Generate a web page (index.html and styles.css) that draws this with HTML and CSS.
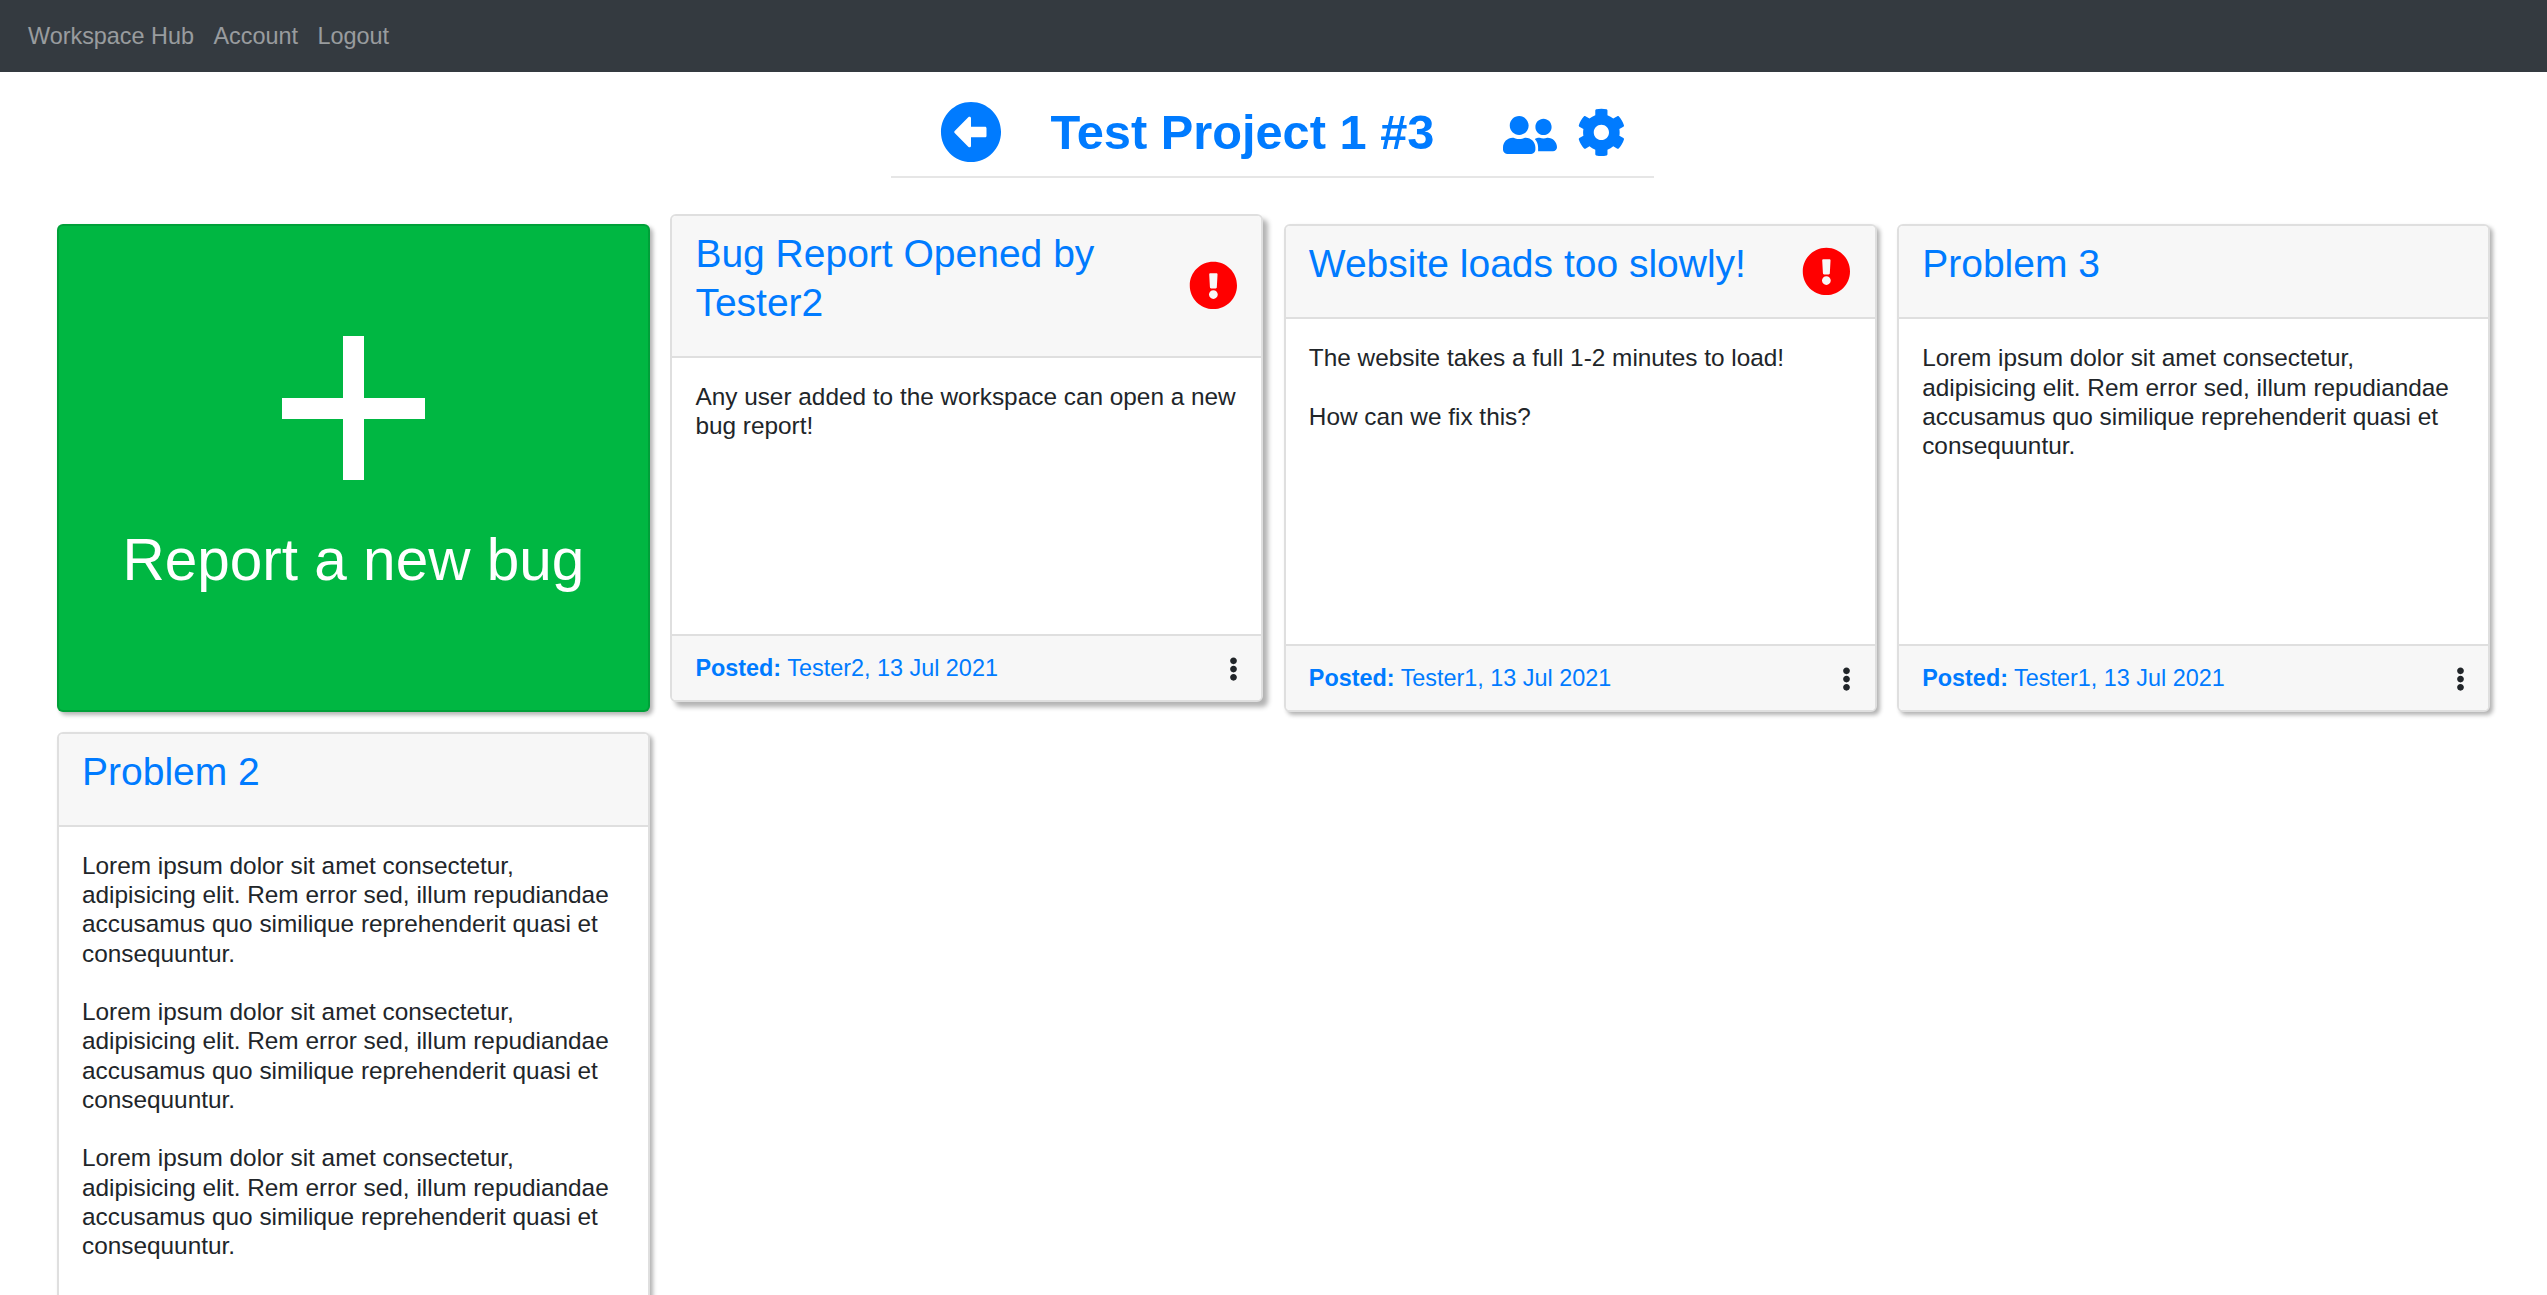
FILE: index.html
```html
<!DOCTYPE HTML>
<html>
<head>
    <title>Test Project 1 #3</title>
    <link rel="stylesheet" href="styles.css">
</head>
<body>

<nav class="navbar">
    <a href="#">Workspace Hub</a>
    <a href="#">Account</a>
    <a href="#">Logout</a>
</nav>

<header class="project-head">
    <a href="#" class="back-link">
        <svg class="icon-back" viewBox="0 0 512 512"><path d="M256 504C119 504 8 393 8 256S119 8 256 8s248 111 248 248-111 248-248 248zm116-292H256v-70.9c0-10.7-13-16.1-20.5-8.5L121.2 247.5c-4.7 4.7-4.7 12.2 0 16.9l114.3 114.9c7.6 7.6 20.5 2.2 20.5-8.5V300h116c6.6 0 12-5.4 12-12v-64c0-6.6-5.4-12-12-12z"/></svg>
    </a>
    <h1>Test Project 1 #3</h1>
    <svg class="icon-users" viewBox="0 0 640 512"><path d="M192 256c61.9 0 112-50.1 112-112S253.9 32 192 32 80 82.1 80 144s50.1 112 112 112zm76.8 32h-8.3c-20.8 10-43.9 16-68.5 16s-47.6-6-68.5-16h-8.3C51.6 288 0 339.6 0 403.2V432c0 26.5 21.5 48 48 48h288c26.5 0 48-21.5 48-48v-28.8c0-63.6-51.6-115.2-115.2-115.2zM480 256c53 0 96-43 96-96s-43-96-96-96-96 43-96 96 43 96 96 96zm48 32h-3.8c-13.9 4.8-28.6 8-44.2 8s-30.3-3.2-44.2-8H432c-20.4 0-39.2 5.9-55.7 15.4 24.4 26.3 39.7 61.2 39.7 99.8v38.4c0 2.2-.5 4.3-.6 6.4H592c26.5 0 48-21.5 48-48 0-61.9-50.1-112-112-112z"/></svg>
    <svg class="icon-cog" viewBox="0 0 512 512"><path d="M487.4 315.7l-42.6-24.6c4.3-23.2 4.3-47 0-70.2l42.6-24.6c4.9-2.8 7.1-8.6 5.5-14-11.1-35.6-30-67.8-54.7-94.6-3.8-4.1-10-5.1-14.8-2.3L380.8 110c-17.9-15.4-38.5-27.3-60.8-35.1V25.8c0-5.6-3.9-10.5-9.4-11.7-36.7-8.2-74.3-7.8-109.2 0-5.5 1.2-9.4 6.1-9.4 11.7V75c-22.2 7.9-42.8 19.8-60.8 35.1L88.7 85.5c-4.9-2.8-11-1.9-14.8 2.3-24.7 26.7-43.6 58.9-54.7 94.6-1.7 5.4.6 11.2 5.5 14L67.3 221c-4.3 23.2-4.3 47 0 70.2l-42.6 24.6c-4.9 2.8-7.1 8.6-5.5 14 11.1 35.6 30 67.8 54.7 94.6 3.8 4.1 10 5.1 14.8 2.3l42.6-24.6c17.9 15.4 38.5 27.3 60.8 35.1v49.2c0 5.6 3.9 10.5 9.4 11.7 36.7 8.2 74.3 7.8 109.2 0 5.5-1.2 9.4-6.1 9.4-11.7v-49.2c22.2-7.9 42.8-19.8 60.8-35.1l42.6 24.6c4.9 2.8 11 1.9 14.8-2.3 24.7-26.7 43.6-58.9 54.7-94.6 1.5-5.5-.7-11.3-5.6-14.1zM256 336c-44.1 0-80-35.9-80-80s35.9-80 80-80 80 35.9 80 80-35.9 80-80 80z"/></svg>
</header>

<main class="board">

    <a href="#" class="new-card">
        <svg class="icon-plus" viewBox="0 0 143 144"><path d="M61 0h21v62h61v21H82v61H61V83H0V62h61z"/></svg>
        <span>Report a new bug</span>
    </a>

    <div class="card card-hover">
        <div class="card-header">
            <h2>Bug Report Opened by Tester2</h2>
            <svg class="icon-alert" viewBox="0 0 512 512"><path d="M504 256c0 136.997-111.043 248-248 248S8 392.997 8 256C8 119.083 119.043 8 256 8s248 111.083 248 248zm-248 50c-25.405 0-46 20.595-46 46s20.595 46 46 46 46-20.595 46-46-20.595-46-46-46zm-43.673-165.346l7.418 136c.347 6.364 5.609 11.346 11.982 11.346h48.546c6.373 0 11.635-4.982 11.982-11.346l7.418-136c.375-6.874-5.098-12.654-11.982-12.654h-63.383c-6.884 0-12.356 5.78-11.981 12.654z"/></svg>
        </div>
        <div class="card-body">
            <p>Any user added to the workspace can open a new bug report!</p>
        </div>
        <div class="card-footer">
            <span><b>Posted:</b> Tester2, 13 Jul 2021</span>
            <svg class="icon-more" viewBox="0 0 192 512"><path d="M96 184c39.8 0 72 32.2 72 72s-32.2 72-72 72-72-32.2-72-72 32.2-72 72-72zM24 80c0 39.8 32.2 72 72 72s72-32.2 72-72S135.8 8 96 8 24 40.2 24 80zm0 352c0 39.8 32.2 72 72 72s72-32.2 72-72-32.2-72-72-72-72 32.2-72 72z"/></svg>
        </div>
    </div>

    <div class="card">
        <div class="card-header">
            <h2>Website loads too slowly!</h2>
            <svg class="icon-alert" viewBox="0 0 512 512"><path d="M504 256c0 136.997-111.043 248-248 248S8 392.997 8 256C8 119.083 119.043 8 256 8s248 111.083 248 248zm-248 50c-25.405 0-46 20.595-46 46s20.595 46 46 46 46-20.595 46-46-20.595-46-46-46zm-43.673-165.346l7.418 136c.347 6.364 5.609 11.346 11.982 11.346h48.546c6.373 0 11.635-4.982 11.982-11.346l7.418-136c.375-6.874-5.098-12.654-11.982-12.654h-63.383c-6.884 0-12.356 5.78-11.981 12.654z"/></svg>
        </div>
        <div class="card-body">
            <p>The website takes a full 1-2 minutes to load!</p>
            <p>How can we fix this?</p>
        </div>
        <div class="card-footer">
            <span><b>Posted:</b> Tester1, 13 Jul 2021</span>
            <svg class="icon-more" viewBox="0 0 192 512"><path d="M96 184c39.8 0 72 32.2 72 72s-32.2 72-72 72-72-32.2-72-72 32.2-72 72-72zM24 80c0 39.8 32.2 72 72 72s72-32.2 72-72S135.8 8 96 8 24 40.2 24 80zm0 352c0 39.8 32.2 72 72 72s72-32.2 72-72-32.2-72-72-72-72 32.2-72 72z"/></svg>
        </div>
    </div>

    <div class="card">
        <div class="card-header">
            <h2>Problem 3</h2>
        </div>
        <div class="card-body">
            <p>Lorem ipsum dolor sit amet consectetur, adipisicing elit. Rem error sed, illum repudiandae accusamus quo similique reprehenderit quasi et consequuntur.</p>
        </div>
        <div class="card-footer">
            <span><b>Posted:</b> Tester1, 13 Jul 2021</span>
            <svg class="icon-more" viewBox="0 0 192 512"><path d="M96 184c39.8 0 72 32.2 72 72s-32.2 72-72 72-72-32.2-72-72 32.2-72 72-72zM24 80c0 39.8 32.2 72 72 72s72-32.2 72-72S135.8 8 96 8 24 40.2 24 80zm0 352c0 39.8 32.2 72 72 72s72-32.2 72-72-32.2-72-72-72-72 32.2-72 72z"/></svg>
        </div>
    </div>

    <div class="card">
        <div class="card-header">
            <h2>Problem 2</h2>
        </div>
        <div class="card-body">
            <p>Lorem ipsum dolor sit amet consectetur, adipisicing elit. Rem error sed, illum repudiandae accusamus quo similique reprehenderit quasi et consequuntur.</p>
            <p>Lorem ipsum dolor sit amet consectetur, adipisicing elit. Rem error sed, illum repudiandae accusamus quo similique reprehenderit quasi et consequuntur.</p>
            <p>Lorem ipsum dolor sit amet consectetur, adipisicing elit. Rem error sed, illum repudiandae accusamus quo similique reprehenderit quasi et consequuntur.</p>
        </div>
    </div>

</main>

</body>
</html>
```

FILE: styles.css
```css
html {
    font-size: 19.5px;
}

html, body {
    margin: 0;
    padding: 0;
    height: 1295px;
    overflow: hidden;
    background: #fff;
}

body {
    font-family: "Liberation Sans", Arial, sans-serif;
    font-size: 1.25rem;
    line-height: 1.5rem;
    color: #212529;
}

a {
    text-decoration: none;
}

.navbar {
    display: flex;
    align-items: center;
    gap: 1rem;
    box-sizing: border-box;
    height: 72px;
    padding: 1px 28px 0;
    background: #343a40;
}
.navbar a {
    color: rgba(255, 255, 255, .5);
    font-size: 1.2rem;
}

.project-head {
    display: flex;
    align-items: center;
    box-sizing: border-box;
    height: 106px;
    margin: 0 893px 0 891px;
    padding: 16px 0 0 49px;
    border-bottom: 2px solid #e6e6e6;
    color: #007bff;
    fill: #007bff;
}
.project-head h1 {
    margin: 0 68.5px 0 48.5px;
    font-size: 2.5rem;
    line-height: 58px;
    font-weight: bold;
    white-space: nowrap;
}
.back-link {
    display: flex;
    fill: #007bff;
}
.icon-back {
    width: 62px;
    height: 62px;
}
.icon-users {
    flex: none;
    width: 54px;
    height: 44px;
    margin: 5px 20px 0 0;
}
.icon-cog {
    flex: none;
    width: 2.5rem;
    height: 2.5rem;
}

.board {
    display: grid;
    grid-template-columns: repeat(4, 1fr);
    grid-template-rows: 488px;
    gap: 19.5px 20.6px;
    padding: 46px 57px 0;
}

.new-card {
    display: flex;
    flex-direction: column;
    align-items: center;
    box-sizing: border-box;
    border: 2px solid rgba(0, 0, 0, .125);
    border-radius: 6px;
    background: #00b742;
    box-shadow: 3px 3px 4px rgba(0, 0, 0, .3);
    color: #fff;
    fill: #fff;
    font-size: 3rem;
    line-height: 72px;
}
.icon-plus {
    width: 143px;
    height: 144px;
    margin: 110px 0 44px;
}

.card {
    display: flex;
    flex-direction: column;
    border: 2px solid #dfdfdf;
    border-radius: 6px;
    background: #fff;
    box-shadow: 3px 3px 4px rgba(0, 0, 0, .3);
}
.card-hover {
    transform: translateY(-10px);
    box-shadow: 5px 5px 5px rgba(0, 0, 0, .3);
}

.card-header {
    display: flex;
    align-items: center;
    justify-content: space-between;
    padding: 14px 23.5px 28.5px 23px;
    border-bottom: 2px solid #dfdfdf;
    background: #f7f7f7;
    border-radius: 4px 4px 0 0;
}
.card-header h2 {
    margin: 0;
    font-size: 2rem;
    line-height: 2.5rem;
    font-weight: normal;
    color: #007bff;
}

.icon-alert {
    flex: none;
    align-self: center;
    width: 2.5rem;
    height: 2.5rem;
    margin: 0 0 -14px 20px;
    fill: #f00;
}

.card-body {
    flex: 1;
    padding: 24px 23px 23px;
}
.card-body p {
    margin: 0 0 1.5rem;
}

.card-footer {
    display: flex;
    align-items: center;
    justify-content: space-between;
    box-sizing: border-box;
    height: 66px;
    padding: 2px 23.5px 0 23px;
    border-top: 2px solid #dfdfdf;
    background: #f7f7f7;
    color: #007bff;
    font-size: 1.2rem;
    border-radius: 0 0 4px 4px;
}
.icon-more {
    width: 9px;
    height: 24px;
    fill: #212529;
}
```
